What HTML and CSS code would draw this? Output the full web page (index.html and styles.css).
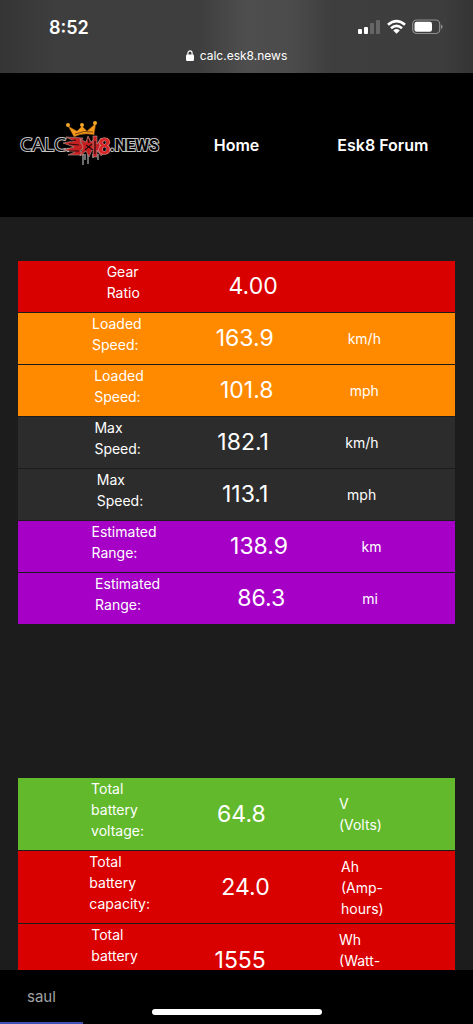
FILE: index.html
```html
<!DOCTYPE html>
<html lang="en">
<head>
    <meta charset="UTF-8">
    <meta name="viewport" content="width=device-width, initial-scale=1.0">
    <title>calc.esk8.news</title>
    <link rel="stylesheet" href="styles.css">
</head>
<body>
    <div class="browser-bar">
        <div class="status">
            <span class="time">8:52</span>
            <div class="status-icons">
                <svg width="23" height="16" viewBox="0 0 23 16">
                    <rect x="0" y="10" width="4" height="5" rx="1" fill="#fff"/>
                    <rect x="6" y="8" width="4" height="7" rx="1" fill="#fff"/>
                    <rect x="12" y="4" width="4" height="11" rx="1" fill="#666"/>
                    <rect x="18" y="1" width="4" height="14" rx="1" fill="#666"/>
                </svg>
                <svg width="19" height="16" viewBox="0 0 19 16">
                    <g fill="none" stroke="#fff" stroke-width="2.6">
                        <path d="M1 5.8Q9.5 -1.4 18 5.8"/>
                        <path d="M4 9.2Q9.5 4.4 15 9.2"/>
                    </g>
                    <path d="M6.2 11.4Q9.5 8.8 12.8 11.4L9.5 14.8Z" fill="#fff"/>
                </svg>
                <svg width="31" height="16" viewBox="0 0 31 16">
                    <rect x="0.7" y="1" width="27" height="13.5" rx="4" fill="none" stroke="#8e8e8e" stroke-width="1.2"/>
                    <rect x="2.5" y="2.8" width="17.5" height="10" rx="2.2" fill="#fff"/>
                    <path d="M29 5.5q1.6 .6 1.6 2.3t-1.6 2.3z" fill="#8e8e8e"/>
                </svg>
            </div>
        </div>
        <div class="address">
            <svg width="8" height="11" viewBox="0 0 8 11">
                <rect x="0" y="4.5" width="8" height="6.5" rx="1.2" fill="#fff"/>
                <path d="M1.9 5V3.2a2.1 2.3 0 0 1 4.2 0V5" fill="none" stroke="#fff" stroke-width="1.2"/>
            </svg>
            <span>calc.esk8.news</span>
        </div>
    </div>

    <nav class="navbar">
        <a href="#" class="logo" aria-label="calc.esk8.news">
            <svg width="142" height="50" viewBox="0 0 142 50">
                <text class="logo-text logo-calc" x="1" y="31">CALC.</text>
                <text class="logo-text logo-news" x="91" y="31">.NEWS</text>
                <!-- paint drips -->
                <path d="M64 34V45M69 34V44M79 34V40M74 34V38M66 34V40" stroke="#b5b5b5" stroke-width="1.2"/>
                <!-- spiky lettering -->
                <g class="logo-spikes">
                    <path d="M47 17L64 18L61 23L66 26L61 31L65 35L49 35L56 32L44 30L55 27L44 23L55 21Z"/>
                    <path d="M61 19L67 22L69 16L72 22L77 18L75 25L80 32L73 30L70 37L67 31L61 36L64 27Z"/>
                    <path d="M74 16H78V24L82 18L84 20L81 26L84 34L82 36L78 30V37H74Z"/>
                </g>
                <path d="M50 24L60 25M50 31L60 31M57 20L52 21M67 25L74 30M73 24L66 30M76 21V34M69 19L70 23" fill="none" stroke="#2a0d0c" stroke-width="1.2"/>
                <text class="logo-eight" x="79" y="34">8</text>
                <!-- crown -->
                <path d="M55 17L49 6L58 11L63 6L68 11L77 3L75 15Q64 12 55 17Z" fill="#f59a1b" stroke="#66350b" stroke-width="0.6"/>
                <path d="M56 14Q65 10 74 12" fill="none" stroke="#7c4210"/>
                <g fill="#f5a52a">
                    <circle cx="49" cy="5" r="2"/>
                    <circle cx="63" cy="5" r="2"/>
                    <circle cx="76" cy="3" r="2"/>
                </g>
            </svg>
        </a>
        <a href="#">Home</a>
        <a href="#">Esk8 Forum</a>
    </nav>

    <main class="results">
        <section class="group">
            <div class="row red">
                <span class="label">Gear Ratio</span>
                <span class="value">4.00</span>
                <span class="unit"></span>
            </div>
            <div class="row orange">
                <span class="label">Loaded Speed:</span>
                <span class="value">163.9</span>
                <span class="unit">km/h</span>
            </div>
            <div class="row orange">
                <span class="label">Loaded Speed:</span>
                <span class="value">101.8</span>
                <span class="unit">mph</span>
            </div>
            <div class="row dark">
                <span class="label">Max Speed:</span>
                <span class="value">182.1</span>
                <span class="unit">km/h</span>
            </div>
            <div class="row dark">
                <span class="label">Max Speed:</span>
                <span class="value">113.1</span>
                <span class="unit">mph</span>
            </div>
            <div class="row purple">
                <span class="label">Estimated Range:</span>
                <span class="value">138.9</span>
                <span class="unit">km</span>
            </div>
            <div class="row purple">
                <span class="label">Estimated Range:</span>
                <span class="value">86.3</span>
                <span class="unit">mi</span>
            </div>
        </section>

        <section class="group">
            <div class="row green">
                <span class="label">Total battery voltage:</span>
                <span class="value">64.8</span>
                <span class="unit">V (Volts)</span>
            </div>
            <div class="row red">
                <span class="label">Total battery capacity:</span>
                <span class="value">24.0</span>
                <span class="unit">Ah (Amp-hours)</span>
            </div>
            <div class="row red">
                <span class="label">Total battery energy:</span>
                <span class="value">1555</span>
                <span class="unit">Wh (Watt-hours)</span>
            </div>
        </section>
    </main>

    <footer class="tab-bar">
        <button class="tab" type="button">saul</button>
        <div class="home-indicator"></div>
    </footer>
</body>
</html>
```
FILE: styles.css
```css
* {
    box-sizing: border-box;
}

body {
    margin: 0;
    height: 100vh;
    display: flex;
    flex-direction: column;
    overflow: hidden;
    background: #1c1c1c;
    color: #fff;
    font-family: Inter, "Liberation Sans", sans-serif;
    font-size: 14px;
    line-height: 21px;
}

/* Phone status and address */
.browser-bar {
    flex: none;
    height: 73px;
    padding-top: 14px;
    background: linear-gradient(90deg, #353535, #3e3e3e 12%, #3e3e3e 42%, #4e4e4e 52%, #4b4b4b 62%, #3e3e3e 70%, #3d3d3d 94%, #343434);
}

.status {
    display: flex;
    justify-content: space-between;
    align-items: center;
    height: 26px;
    padding: 0 30px 0 49px;
}

.time {
    font-size: 18px;
    font-weight: 600;
}

.status-icons {
    display: flex;
    gap: 6px;
}

.address {
    display: flex;
    justify-content: center;
    align-items: center;
    gap: 6px;
    height: 30px;
    font-size: 12px;
}

/* Navigation */
.navbar {
    flex: none;
    display: grid;
    grid-template-columns: repeat(3, 1fr);
    align-items: center;
    justify-items: center;
    height: 144px;
    padding: 0 17px;
    background: #000;
}

.navbar a {
    color: #fff;
    font-size: 16px;
    font-weight: 600;
    text-decoration: none;
}

.logo svg {
    display: block;
}

.logo-text {
    fill: #000;
    stroke: #c4c4c4;
    stroke-width: 2;
    paint-order: stroke;
}

.logo-calc {
    font-family: "Open Sans", sans-serif;
    font-size: 19px;
    font-weight: 400;
}

.logo-news {
    font-family: Roboto, sans-serif;
    font-size: 16px;
    font-weight: 700;
}

.logo-spikes {
    fill: #c51f22;
    stroke: #b9a09a;
    stroke-width: 0.6;
}

.logo-eight {
    fill: #d62427;
    stroke: #e0b5b0;
    stroke-width: 1;
    paint-order: stroke;
    font-family: Roboto, sans-serif;
    font-size: 22px;
    font-weight: 700;
}

/* Result tables */
.results {
    flex: 1;
    min-height: 0;
    overflow: hidden;
    padding: 44px 18px 0;
}

.group {
    margin-bottom: 153px;
}

.row {
    display: flex;
    justify-content: space-evenly;
    align-items: center;
    border-bottom: 1px solid #1c1c1c;
}

.label {
    width: min-content;
    margin-bottom: 9px;
}

.value {
    font-size: 23px;
    font-weight: 400;
}

.unit {
    width: min-content;
}

.red {
    background: #d90000;
}

.orange {
    background: #ff8a00;
}

.dark {
    background: #2c2c2c;
}

.purple {
    background: #a600c7;
}

.green {
    background: #62b92c;
}

/* Bottom bar */
.tab-bar {
    position: relative;
    flex: none;
    height: 54px;
    background: #000;
}

.tab {
    height: 100%;
    padding: 0 27px;
    border: none;
    border-bottom: 2px solid #3f51b5;
    background: none;
    color: #a3a3a3;
    font-family: inherit;
    font-size: 15px;
}

.home-indicator {
    position: absolute;
    bottom: 9px;
    left: 50%;
    width: 170px;
    height: 6px;
    border-radius: 3px;
    background: #fff;
    transform: translateX(-50%);
}
```
